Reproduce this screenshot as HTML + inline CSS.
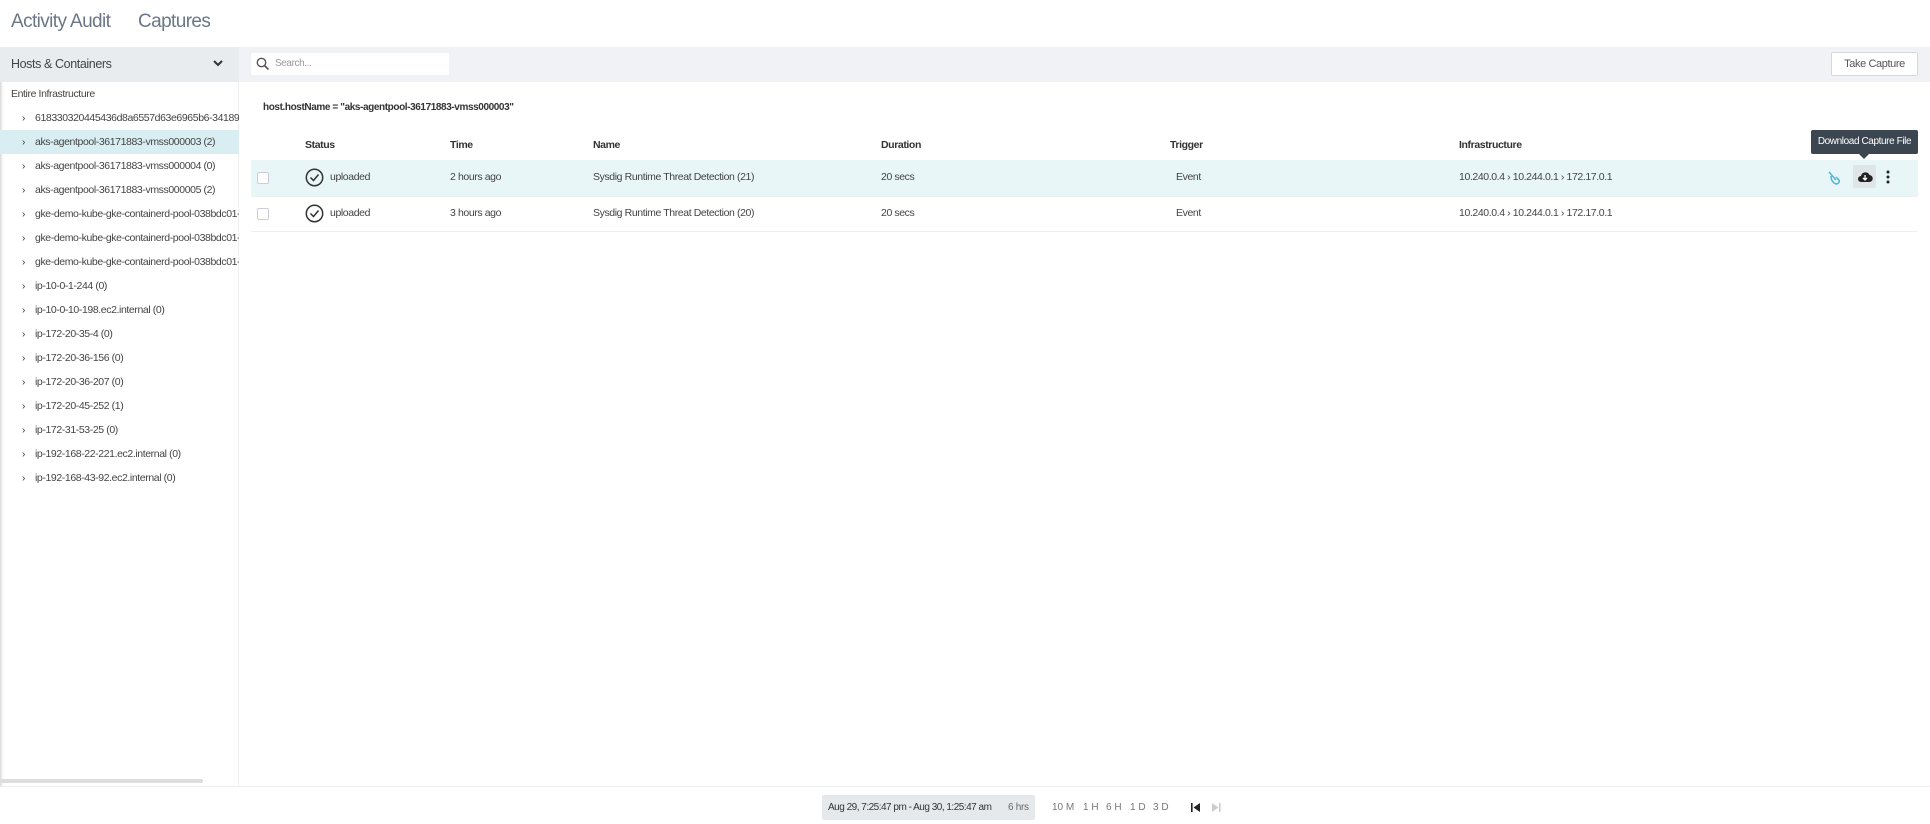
<!DOCTYPE html>
<html><head><meta charset="utf-8"><style>
*{box-sizing:border-box;margin:0;padding:0}
body{width:1930px;height:824px;overflow:hidden;background:#fff;font-family:"Liberation Sans",sans-serif;color:#333;position:relative;font-size:11px;letter-spacing:-0.4px}
.a{position:absolute;white-space:nowrap}
.title{top:11px;font-size:19px;color:#6b7785;letter-spacing:-0.6px}
.bar{left:0;top:47px;width:1930px;height:35px;background:#f0f2f5}
.side{left:0;top:47px;width:239px;height:740px;border-right:1px solid #eef0f2;box-shadow:inset 3px 0 3px -2px #ccc}
.sh{left:0;top:47px;width:239px;height:35px;background:#e9ecef}
.it{left:22px;font-size:10.5px;color:#444;height:24px;line-height:24px;width:217px;overflow:hidden}
.it b{font-weight:normal;display:inline-block;width:13px;font-size:10px;color:#333}
.th{top:139px;font-weight:bold;font-size:10.5px;color:#333}
.cb{width:12px;height:12px;border:1px solid #ccd;border-radius:2px;background:#fff}
.td{font-size:10.5px;color:#444}
</style></head><body>
<div class="a title" style="left:11px">Activity Audit</div>
<div class="a title" style="left:138px">Captures</div>
<div class="a bar"></div>
<div class="a side"></div>
<div class="a sh"></div>
<div class="a" style="left:11px;top:57px;font-size:12.5px;color:#444">Hosts &amp; Containers</div>
<svg class="a" style="left:212px;top:59px" width="12" height="10"><path d="M2 2l4 4 4-4" stroke="#333" stroke-width="2" fill="none"/></svg>
<div class="a" style="left:11px;top:88px;font-size:10.5px;color:#444">Entire Infrastructure</div>
<div class="a" style="left:0;top:130px;width:239px;height:24px;background:#d9eef2"></div>
<div class="a it" style="top:106px"><b>›</b>618330320445436d8a6557d63e6965b6-34189a</div>
<div class="a it" style="top:130px"><b>›</b>aks-agentpool-36171883-vmss000003 (2)</div>
<div class="a it" style="top:154px"><b>›</b>aks-agentpool-36171883-vmss000004 (0)</div>
<div class="a it" style="top:178px"><b>›</b>aks-agentpool-36171883-vmss000005 (2)</div>
<div class="a it" style="top:202px"><b>›</b>gke-demo-kube-gke-containerd-pool-038bdc01-1</div>
<div class="a it" style="top:226px"><b>›</b>gke-demo-kube-gke-containerd-pool-038bdc01-f</div>
<div class="a it" style="top:250px"><b>›</b>gke-demo-kube-gke-containerd-pool-038bdc01-f</div>
<div class="a it" style="top:274px"><b>›</b>ip-10-0-1-244 (0)</div>
<div class="a it" style="top:298px"><b>›</b>ip-10-0-10-198.ec2.internal (0)</div>
<div class="a it" style="top:322px"><b>›</b>ip-172-20-35-4 (0)</div>
<div class="a it" style="top:346px"><b>›</b>ip-172-20-36-156 (0)</div>
<div class="a it" style="top:370px"><b>›</b>ip-172-20-36-207 (0)</div>
<div class="a it" style="top:394px"><b>›</b>ip-172-20-45-252 (1)</div>
<div class="a it" style="top:418px"><b>›</b>ip-172-31-53-25 (0)</div>
<div class="a it" style="top:442px"><b>›</b>ip-192-168-22-221.ec2.internal (0)</div>
<div class="a it" style="top:466px"><b>›</b>ip-192-168-43-92.ec2.internal (0)</div>
<div class="a" style="left:0;top:779px;width:203px;height:4px;background:#ddd;border-radius:2px"></div>

<div class="a" style="left:251px;top:53px;width:198px;height:22px;background:#fff;border-radius:2px"></div>
<svg class="a" style="left:256px;top:57px" width="14" height="14"><circle cx="5.5" cy="5.5" r="4.2" stroke="#555" stroke-width="1.4" fill="none"/><path d="M8.5 8.5l4 4" stroke="#555" stroke-width="1.6"/></svg>
<div class="a" style="left:275px;top:58px;font-size:10px;color:#999">Search...</div>
<div class="a" style="left:1831px;top:52px;width:87px;height:24px;background:#fff;border:1px solid #d4d8dd;border-radius:2px;font-size:11px;color:#555;text-align:center;line-height:22px">Take Capture</div>

<div class="a" style="left:263px;top:102px;font-weight:bold;font-size:10px;color:#333">host.hostName = "aks-agentpool-36171883-vmss000003"</div>

<div class="a th" style="left:305px">Status</div>
<div class="a th" style="left:450px">Time</div>
<div class="a th" style="left:593px">Name</div>
<div class="a th" style="left:881px">Duration</div>
<div class="a th" style="left:1170px">Trigger</div>
<div class="a th" style="left:1459px">Infrastructure</div>

<div class="a" style="left:251px;top:160px;width:1667px;height:36px;background:#e8f6f8"></div>
<div class="a" style="left:251px;top:231px;width:1667px;height:1px;background:#eceef0"></div>
<div class="a" style="left:251px;top:196px;width:1667px;height:1px;background:#eceef0"></div>

<div class="a cb" style="left:257px;top:172px"></div>
<div class="a cb" style="left:257px;top:208px"></div>
<svg class="a" style="left:305px;top:168px" width="19" height="19"><circle cx="9.5" cy="9.5" r="8.2" stroke="#333" stroke-width="1.5" fill="none"/><path d="M5.5 9.5l3 3 5-6" stroke="#333" stroke-width="1.5" fill="none"/></svg>
<svg class="a" style="left:305px;top:204px" width="19" height="19"><circle cx="9.5" cy="9.5" r="8.2" stroke="#333" stroke-width="1.5" fill="none"/><path d="M5.5 9.5l3 3 5-6" stroke="#333" stroke-width="1.5" fill="none"/></svg>
<div class="a td" style="left:330px;top:171px">uploaded</div>
<div class="a td" style="left:330px;top:207px">uploaded</div>
<div class="a td" style="left:450px;top:171px">2 hours ago</div>
<div class="a td" style="left:450px;top:207px">3 hours ago</div>
<div class="a td" style="left:593px;top:171px">Sysdig Runtime Threat Detection (21)</div>
<div class="a td" style="left:593px;top:207px">Sysdig Runtime Threat Detection (20)</div>
<div class="a td" style="left:881px;top:171px">20 secs</div>
<div class="a td" style="left:881px;top:207px">20 secs</div>
<div class="a td" style="left:1176px;top:171px">Event</div>
<div class="a td" style="left:1176px;top:207px">Event</div>
<div class="a td" style="left:1459px;top:171px">10.240.0.4 › 10.244.0.1 › 172.17.0.1</div>
<div class="a td" style="left:1459px;top:207px">10.240.0.4 › 10.244.0.1 › 172.17.0.1</div>

<svg class="a" style="left:1826px;top:170px" width="16" height="16"><path d="M3 2l7 8M5 6c0 4 2 7 5 8 2 0 4-2 3-4l-3-3" stroke="#4fb6d6" stroke-width="1.5" fill="none"/></svg>
<div class="a" style="left:1853px;top:165px;width:23px;height:23px;background:#dfe5e8;border-radius:2px"></div>
<svg class="a" style="left:1857px;top:170px" width="16" height="13"><path d="M4 12h8a3.5 3.5 0 0 0 0.5-7 4.5 4.5 0 0 0-8.5 1A3 3 0 0 0 4 12z" fill="#222"/><path d="M8 5v5M6 8l2 2 2-2" stroke="#fff" stroke-width="1.3" fill="none"/></svg>
<svg class="a" style="left:1885px;top:169px" width="6" height="16"><circle cx="3" cy="3" r="1.5" fill="#222"/><circle cx="3" cy="8" r="1.5" fill="#222"/><circle cx="3" cy="13" r="1.5" fill="#222"/></svg>
<div class="a" style="left:1811px;top:130px;width:107px;height:24px;background:#3c4650;border-radius:2px;color:#fff;font-size:10px;text-align:center;line-height:24px">Download Capture File</div>
<div class="a" style="left:1859px;top:154px;width:0;height:0;border-left:5px solid transparent;border-right:5px solid transparent;border-top:5px solid #3c4650"></div>

<div class="a" style="left:0;top:786px;width:1930px;height:1px;background:#eceef0"></div>
<div class="a" style="left:822px;top:795px;width:213px;height:25px;background:#e6e9ec;border-radius:2px"></div>
<div class="a" style="left:828px;top:802px;font-size:10px;color:#333;letter-spacing:-0.5px">Aug 29, 7:25:47 pm - Aug 30, 1:25:47 am</div>
<div class="a" style="left:1008px;top:802px;font-size:10px;color:#666;letter-spacing:-0.3px">6 hrs</div>
<div class="a" style="left:1052px;top:802px;font-size:10px;color:#777;letter-spacing:0">10 M</div>
<div class="a" style="left:1083px;top:802px;font-size:10px;color:#777;letter-spacing:0">1 H</div>
<div class="a" style="left:1106px;top:802px;font-size:10px;color:#777;letter-spacing:0">6 H</div>
<div class="a" style="left:1130px;top:802px;font-size:10px;color:#777;letter-spacing:0">1 D</div>
<div class="a" style="left:1153px;top:802px;font-size:10px;color:#777;letter-spacing:0">3 D</div>
<svg class="a" style="left:1191px;top:802px" width="30" height="11"><rect x="0" y="1" width="1.6" height="9" fill="#222"/><path d="M9 1v9L2.5 5.5z" fill="#222"/><path d="M21 1v9l6.5-4.5z" fill="#ccc"/><rect x="28" y="1" width="1.6" height="9" fill="#ccc"/></svg>
</body></html>
